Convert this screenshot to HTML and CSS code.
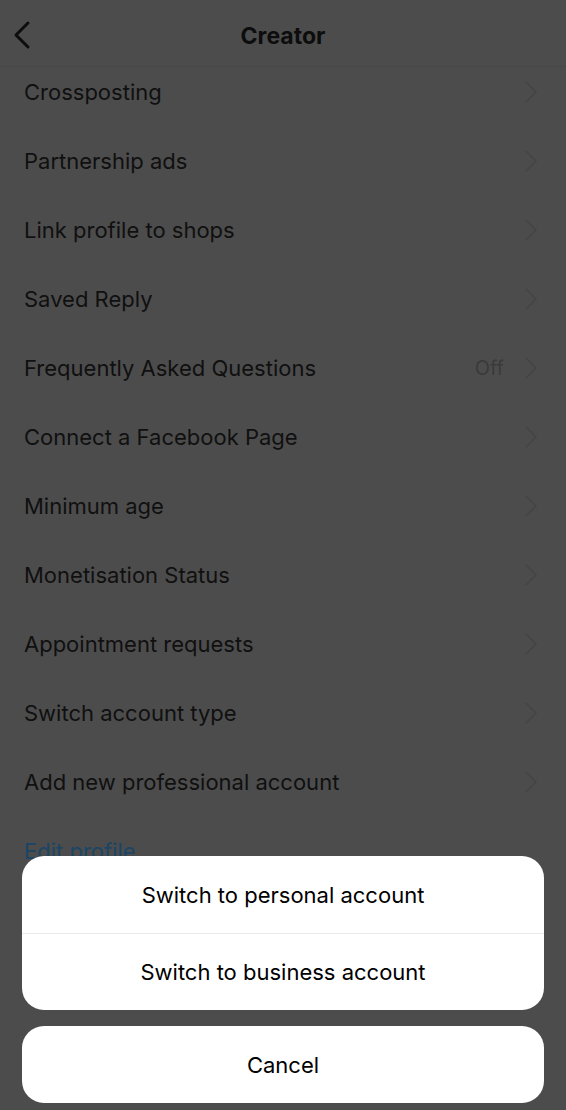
FILE: index.html
```
<!DOCTYPE html>
<html lang="en">
<head>
<meta charset="utf-8">
<link rel="stylesheet" href="styles.css">
</head>
<body>
<div class="screen">
  <header class="topbar">
    <svg class="back" width="20" height="30" viewBox="0 0 20 30"><path d="M16 3 L4 15 L16 27" fill="none" stroke="#0d0d0d" stroke-width="3" stroke-linecap="round" stroke-linejoin="round"/></svg>
    <h1 class="title">Creator</h1>
  </header>
  <div class="list">
    <div class="list-inner">
      <div class="row"><span class="label">Crossposting</span><svg class="chev" viewBox="0 0 14 24"><path d="M2 2 L12 12 L2 22"/></svg></div>
      <div class="row"><span class="label">Partnership ads</span><svg class="chev" viewBox="0 0 14 24"><path d="M2 2 L12 12 L2 22"/></svg></div>
      <div class="row"><span class="label">Link profile to shops</span><svg class="chev" viewBox="0 0 14 24"><path d="M2 2 L12 12 L2 22"/></svg></div>
      <div class="row"><span class="label">Saved Reply</span><svg class="chev" viewBox="0 0 14 24"><path d="M2 2 L12 12 L2 22"/></svg></div>
      <div class="row"><span class="label">Frequently Asked Questions</span><span class="value">Off</span><svg class="chev" viewBox="0 0 14 24"><path d="M2 2 L12 12 L2 22"/></svg></div>
      <div class="row"><span class="label">Connect a Facebook Page</span><svg class="chev" viewBox="0 0 14 24"><path d="M2 2 L12 12 L2 22"/></svg></div>
      <div class="row"><span class="label">Minimum age</span><svg class="chev" viewBox="0 0 14 24"><path d="M2 2 L12 12 L2 22"/></svg></div>
      <div class="row"><span class="label">Monetisation Status</span><svg class="chev" viewBox="0 0 14 24"><path d="M2 2 L12 12 L2 22"/></svg></div>
      <div class="row"><span class="label">Appointment requests</span><svg class="chev" viewBox="0 0 14 24"><path d="M2 2 L12 12 L2 22"/></svg></div>
      <div class="row"><span class="label">Switch account type</span><svg class="chev" viewBox="0 0 14 24"><path d="M2 2 L12 12 L2 22"/></svg></div>
      <div class="row"><span class="label">Add new professional account</span><svg class="chev" viewBox="0 0 14 24"><path d="M2 2 L12 12 L2 22"/></svg></div>
      <div class="row link-row"><span class="link">Edit profile</span></div>
    </div>
  </div>
  <div class="sheet">
    <div class="card">
      <button class="action">Switch to personal account</button>
      <button class="action">Switch to business account</button>
    </div>
    <div class="card cancel-card">
      <button class="action cancel">Cancel</button>
    </div>
  </div>
</div>
</body>
</html>
```
FILE: styles.css
```
html, body {
  margin: 0;
  padding: 0;
}
body {
  background: #4c4c4c;
  font-family: Inter, "Liberation Sans", sans-serif;
}
.screen {
  position: relative;
  width: 566px;
  height: 1110px;
  overflow: hidden;
  background: #4c4c4c;
}
.topbar {
  position: relative;
  z-index: 1;
  height: 66px;
  border-bottom: 1px solid #474747;
  background: #4c4c4c;
  display: flex;
  align-items: center;
  justify-content: center;
}
.back {
  position: absolute;
  left: 12px;
  top: 20px;
}
.title {
  margin: 0;
  padding-top: 5px;
  font-size: 23px;
  font-weight: 700;
  color: #0d0d0d;
}
.list {
  overflow: hidden;
}
.list-inner {
  margin-top: -10px;
}
.row {
  height: 69px;
  display: flex;
  align-items: center;
  padding: 0 28px 0 24px;
}
.label {
  flex: 1;
  font-size: 22px;
  color: #101010;
}
.value {
  font-size: 20px;
  color: #3a3a3a;
  margin-right: 20px;
}
.chev {
  width: 14px;
  height: 24px;
  fill: none;
  stroke: #444444;
  stroke-width: 1.6;
  stroke-linecap: round;
  stroke-linejoin: round;
}
.link {
  font-size: 22px;
  color: #1a4566;
}
.sheet {
  position: absolute;
  left: 22px;
  right: 22px;
  bottom: 7px;
  display: flex;
  flex-direction: column;
  gap: 16px;
}
.card {
  background: #fff;
  border-radius: 22px;
  display: flex;
  flex-direction: column;
  overflow: hidden;
}
.action {
  height: 77px;
  border: 0;
  background: transparent;
  font-family: Inter, "Liberation Sans", sans-serif;
  font-size: 22px;
  color: #000;
  padding: 0;
}
.action + .action {
  border-top: 1px solid #ececec;
}
.cancel {
  height: 77px;
}
```
